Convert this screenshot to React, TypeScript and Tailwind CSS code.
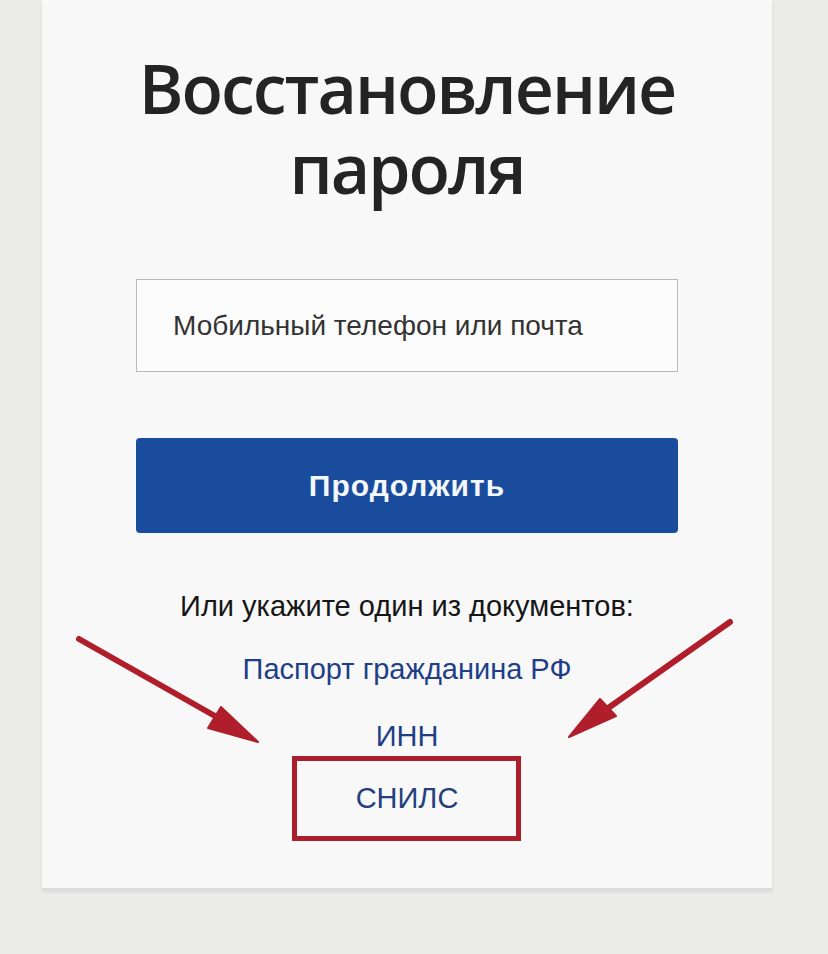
import React from 'react';

const Arrows: React.FC = () => (
  <svg
    className="pointer-events-none absolute left-0 top-0"
    width="828"
    height="954"
    viewBox="0 0 828 954"
  >
    <g fill="#b01e2c" stroke="#b01e2c" strokeLinecap="round" strokeLinejoin="round">
      <line x1="79" y1="639" x2="222" y2="720" strokeWidth="6" />
      <polygon points="258,742 208,728 221,707" strokeWidth="2" />
      <line x1="730" y1="622" x2="604" y2="711" strokeWidth="6" />
      <polygon points="569,737 600,699 616,716" strokeWidth="2" />
    </g>
  </svg>
);

export default function App() {
  return (
    <div className="relative h-[954px] w-[828px] overflow-hidden bg-[#ebecea]">
      <div className="ml-[42px] flex h-[890px] w-[730px] flex-col items-center border-b-2 border-[#dcdcdc] bg-[#f8f8f8] shadow-[0_2px_3px_rgba(0,0,0,0.08)]">
        <h1
          className="mt-[48px] text-center text-[68px] font-semibold leading-[80px] tracking-[-2px] text-[#242424]"
          style={{ fontFamily: '"Open Sans", "Noto Sans", sans-serif' }}
        >
          Восстановление
          <br />
          пароля
        </h1>

        <div className="mt-[71px] flex h-[93px] w-[542px] items-center border border-[#b9b9b9] bg-[#fcfcfc] pl-[36px]">
          <span
            className="text-[28px] text-[#333]"
            style={{ fontFamily: '"Liberation Sans", Arial, sans-serif' }}
          >
            Мобильный телефон или почта
          </span>
        </div>

        <button
          className="mt-[66px] flex h-[95px] w-[542px] items-center justify-center rounded-[4px] bg-[#1a4c9e] text-[30px] font-bold tracking-[1px] text-[#f4f7fb]"
          style={{ fontFamily: '"Liberation Sans", Arial, sans-serif' }}
        >
          Продолжить
        </button>

        <div
          className="flex flex-col items-center"
          style={{ fontFamily: '"Liberation Sans", Arial, sans-serif' }}
        >
          <p className="mt-[58px] text-[29px] leading-[30px] text-[#161616]">
            Или укажите один из документов:
          </p>
          <a className="mt-[33px] text-[29px] leading-[30px] text-[#1e3f88]">
            Паспорт гражданина РФ
          </a>
          <a className="mt-[37px] text-[29px] leading-[30px] text-[#1e3f88]">ИНН</a>
          <div className="mt-[5px] flex h-[85px] w-[229px] items-center justify-center border-[5px] border-[#ab1f2d]">
            <span className="text-[29px] text-[#233f80]">СНИЛС</span>
          </div>
        </div>
      </div>
      <Arrows />
    </div>
  );
}
